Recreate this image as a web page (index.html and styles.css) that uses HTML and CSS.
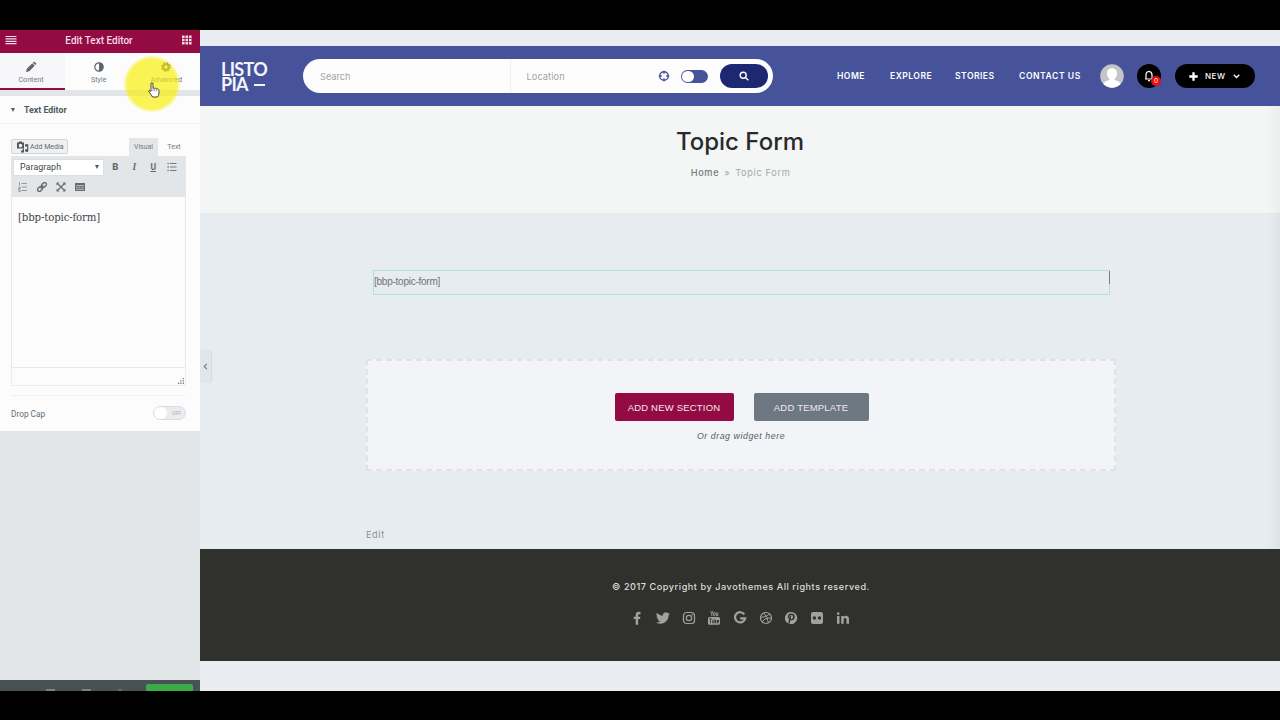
FILE: index.html
```
<!DOCTYPE html>
<html lang="en">
<head>
    <meta charset="UTF-8">
    <meta name="viewport" content="width=device-width, initial-scale=1.0">
    <title>Edit Text Editor - Topic Form</title>
    <link rel="stylesheet" href="styles.css">
</head>
<body>

    <div class="screen">
        <!-- Editor Panel -->
        <aside class="panel">
            <div class="panel-header">
                <svg width="12" height="10" viewBox="0 0 12 10"><path d="M0.5 1.5h11M0.5 3.9h11M0.5 6.3h11M0.5 8.7h11" stroke="#f3dbe5" stroke-width="1.2"/></svg>
                <span class="panel-title">Edit Text Editor</span>
                <svg width="10" height="10" viewBox="0 0 10 10" fill="#f3dbe5"><path d="M0 .5h2.6V3H0zM3.5.5h2.6V3H3.5zM7 .5h2.6V3H7zM0 3.8h2.6v2.4H0zM3.5 3.8h2.6v2.4H3.5zM7 3.8h2.6v2.4H7zM0 7h2.6v2.5H0zM3.5 7h2.6v2.5H3.5zM7 7h2.6v2.5H7z"/></svg>
            </div>

            <div class="tabs">
                <div class="tab active">
                    <svg width="12" height="12" viewBox="0 0 12 12" fill="#5c666d"><path d="M1 11l.8-3.2 5.5-5.5 2.4 2.4-5.5 5.5zM7.9 1.7l.8-.8q.5-.4 1 0l1.4 1.4q.4.5 0 1l-.8.8z"/></svg>
                    <span>Content</span>
                </div>
                <div class="tab">
                    <svg width="12" height="12" viewBox="0 0 12 12"><circle cx="6" cy="6" r="4.2" fill="none" stroke="#5c666d" stroke-width="1.2"/><path d="M6 1.8a4.2 4.2 0 0 1 0 8.4z" fill="#5c666d"/></svg>
                    <span>Style</span>
                </div>
                <div class="tab">
                    <svg width="12" height="12" viewBox="0 0 12 12"><circle cx="6" cy="6" r="2.7" fill="none" stroke="#5c666d" stroke-width="2"/><circle cx="6" cy="6" r="4.1" fill="none" stroke="#5c666d" stroke-width="1.4" stroke-dasharray="1.8 1.42"/></svg>
                    <span>Advanced</span>
                </div>
                <div class="pointer">
                    <svg width="12" height="16" viewBox="0 0 12 16"><path d="M3 9.5V2q0-1.3 1-1.3T5 2v4.2q.9-.7 1.6.2.9-.6 1.6.3 1-.5 1.7.5 1.1.1 1.1 1.5v2.2Q11 13.500 9.500 15H4.500Q3.500 13 1.200 10.200.3 8.800 1.200 8.400 2 8.200 3 9.500z" fill="#fff" stroke="#333" stroke-width=".9"/><path d="M5 6.200v3M6.800 7v2.200M8.600 7.300v2" stroke="#555" stroke-width=".6"/></svg>
                </div>
            </div>

            <div class="controls">
                <div class="section-title"><span class="arrow-down"></span>Text Editor</div>
                <div class="editor">
                    <div class="editor-top">
                        <div class="media-btn">
                            <svg width="13" height="12" viewBox="0 0 13 12" fill="#50575c"><path fill-rule="evenodd" d="M1 1.500h1.500L3.300.5h2.500l.8 1H8v6H1zM4.500 2.800a1.800 1.800 0 1 0 .01 0z"/><path d="M9 3.300h3.300v6.200a1.600 1.500 0 1 1-1.200-1.400V5.500H9zM8 7.500v3a1.500 1.300 0 1 1-1.200-1.200V7.500z"/></svg>
                            <span>Add Media</span>
                        </div>
                        <div class="mode active"><span>Visual</span></div>
                        <div class="mode"><span>Text</span></div>
                    </div>
                    <div class="toolbar">
                        <div class="tool-row">
                            <div class="format"><span>Paragraph</span><span class="arrow-down"></span></div>
                            <b class="tool">B</b>
                            <i class="tool">I</i>
                            <u class="tool">U</u>
                            <svg class="tool" viewBox="0 0 10 10"><path d="M3 1.500h6.500M3 5h6.500M3 8.500h6.500" stroke="#71797f"/><path d="M.5 1.500h1.300M.5 5h1.300M.5 8.500h1.300" stroke="#71797f" stroke-width="1.300"/></svg>
                        </div>
                        <div class="tool-row">
                            <svg class="tool" viewBox="0 0 10 10"><path d="M3.500 1.500H9M3.500 5H9M3.500 8.500H9M1.500 0v3.500M.6 5h1.500v1.500H.6V8h1.600v1.500H.5" stroke="#7d858b" stroke-width=".8" fill="none"/></svg>
                            <svg class="tool" viewBox="0 0 10 10"><g fill="none" stroke="#646c72" stroke-width="1.400" transform="rotate(-45 5 5)"><rect x="-.5" y="3.200" width="5.300" height="3.600" rx="1.800"/><rect x="5.200" y="3.200" width="5.300" height="3.600" rx="1.800"/><path d="M3 5h4"/></g></svg>
                            <svg class="tool" viewBox="0 0 10 10"><path d="M1.500 1.500l7 7M8.500 1.500l-7 7" stroke="#646c72" stroke-width="1.200"/><path d="M.5.5h3l-3 3zM9.500.5v3l-3-3zM.5 9.500v-3l3 3zM9.500 9.500h-3l3-3z" fill="#646c72"/></svg>
                            <svg class="tool" viewBox="0 0 10 10"><path d="M0 1h10v8H0z" fill="#646c72"/><path d="M1 3.700h8M1 7.300h8" stroke="#d5dade" stroke-width=".8"/><path d="M1 5.500h8" stroke="#b9bfc4" stroke-width=".8" stroke-dasharray="1 .5"/></svg>
                        </div>
                    </div>
                    <div class="editor-body"><span>[bbp-topic-form]</span></div>
                    <div class="editor-status">
                        <svg width="6" height="6" viewBox="0 0 6 6" fill="#7d8489"><path d="M4.700 0H6v1.300H4.700zM4.700 2.300H6v1.300H4.700zM2.300 2.300h1.300v1.300H2.300zM4.700 4.600H6V6H4.700zM2.300 4.600h1.300V6H2.300zM0 4.600h1.300V6H0z"/></svg>
                    </div>
                </div>
                <div class="drop-cap">
                    <span>Drop Cap</span>
                    <div class="switch"><span class="knob"></span><span class="off">OFF</span></div>
                </div>
            </div>

            <div class="panel-footer">
                <span class="stub"></span>
                <span class="stub"></span>
                <span class="stub small"></span>
                <div class="update-btn"></div>
            </div>
        </aside>

        <!-- Page Preview -->
        <main class="preview">
            <div class="collapse"><svg width="5" height="7" viewBox="0 0 5 7"><path d="M3.800.8L1.200 3.500l2.600 2.700" fill="none" stroke="#737b82" stroke-width="1.100"/></svg></div>

            <nav class="navbar">
                <div class="logo"><span>LISTO</span><span class="second">PIA<i class="dash"></i></span></div>
                <div class="search-bar">
                    <span class="field search">Search</span>
                    <span class="field location">Location</span>
                    <svg class="locate" width="12" height="12" viewBox="0 0 12 12" fill="none" stroke="#46529a"><circle cx="6" cy="6" r="4.300" stroke-width="1.400"/><path d="M6 .8v3M6 8.200v3M.8 6h3M8.200 6h3" stroke-width="1.400"/></svg>
                    <div class="near-toggle"></div>
                    <div class="search-btn"><svg width="10" height="10" viewBox="0 0 10 10" fill="none" stroke="#fff" stroke-width="1.400"><circle cx="4.200" cy="4.200" r="3"/><path d="M6.400 6.400l2.900 2.900"/></svg></div>
                </div>
                <div class="menu">
                    <span class="home">HOME</span>
                    <span class="explore">EXPLORE</span>
                    <span class="stories">STORIES</span>
                    <span class="contact">CONTACT US</span>
                </div>
                <svg class="avatar" width="24" height="24" viewBox="0 0 24 24"><defs><clipPath id="round"><circle cx="12" cy="12" r="11.800"/></clipPath></defs><g clip-path="url(#round)"><path d="M0 0h24v24H0z" fill="#c5c5c5"/><path d="M12 4.200c3 0 5 2.200 5 5.200 0 2.300-.9 4.200-2.300 5.200v1.400c3 .8 5.500 2 6.300 4.500V24H3v-3.500c.8-2.500 3.300-3.700 6.300-4.500v-1.400C7.900 13.600 7 11.700 7 9.400c0-3 2-5.200 5-5.200z" fill="#fff"/></g></svg>
                <div class="bell">
                    <svg width="12" height="12" viewBox="0 0 12 12" fill="none" stroke="#fff" stroke-width="1.200"><path d="M2 9h8M3 8.800V5q0-3.300 3-3.600Q9 1.700 9 5v3.800M5 10.700h2"/></svg>
                    <span class="badge">0</span>
                </div>
                <div class="new-btn">
                    <svg width="9" height="9" viewBox="0 0 9 9"><path d="M4.500.3v8.400M.3 4.500h8.400" stroke="#fff" stroke-width="2.300"/></svg>
                    <span>NEW</span>
                    <svg width="7" height="5" viewBox="0 0 7 5"><path d="M.8.800l2.700 2.700L6.200.8" fill="none" stroke="#fff" stroke-width="1.300"/></svg>
                </div>
            </nav>

            <header class="page-head">
                <h1>Topic Form</h1>
                <div class="breadcrumb"><b>Home</b><span class="sep">»</span><span>Topic Form</span></div>
            </header>

            <section class="content">
                <div class="widget"><span>[bbp-topic-form]</span><i class="handle"></i></div>
                <div class="drop-area">
                    <div class="actions">
                        <div class="btn add-section"><span>ADD NEW SECTION</span></div>
                        <div class="btn add-template"><span>ADD TEMPLATE</span></div>
                    </div>
                    <p>Or drag widget here</p>
                </div>
                <span class="edit-link">Edit</span>
            </section>

            <footer class="site-footer">
                <p>© 2017 Copyright by Javothemes All rights reserved.</p>
                <div class="social">
                    <svg viewBox="0 0 14 14"><path d="M10.500 1v2.200H9.200q-1.100 0-1.100 1v1.500h2.300l-.3 2.300h-2v5.700H5.700V8h-2V5.700h2V3.900Q5.800.9 8.600.8q1.200 0 1.900.2z"/></svg>
                    <svg viewBox="0 0 24 24"><path d="M23.950 4.570a10 10 0 0 1-2.820.770 4.960 4.960 0 0 0 2.160-2.720c-.95.560-2 .96-3.130 1.180a4.920 4.920 0 0 0-8.380 4.480C7.690 8.100 4.070 6.130 1.640 3.160a4.900 4.900 0 0 0 1.520 6.570 4.900 4.900 0 0 1-2.230-.61v.06c0 2.380 1.700 4.370 3.950 4.820a5 5 0 0 1-2.210.09 4.940 4.940 0 0 0 4.600 3.420A9.870 9.870 0 0 1 0 19.540a13.940 13.940 0 0 0 7.550 2.210c9.050 0 14-7.500 14-13.980l-.02-.63a9.940 9.940 0 0 0 2.420-2.570z"/></svg>
                    <svg viewBox="0 0 14 14"><g fill="none" stroke="#a1a19f" stroke-width="1.200"><rect x="1.500" y="1.500" width="11" height="11" rx="3"/><circle cx="7" cy="7" r="2.700"/></g><circle cx="10.200" cy="3.800" r=".8"/></svg>
                    <svg viewBox="0 0 14 14"><path d="M3.500 0l1.300 2.700V5M6 0L4.800 2.700M6.500 2v2.300q.8 1 1.600 0V2q-.8-1-1.600 0zM9.200 1.300v3.200q.9.600 1.600-.3M10.800 1.300V5" fill="none" stroke="#a1a19f" stroke-width=".9"/><path fill-rule="evenodd" d="M2.500 6h9q1.500 0 1.500 1.500v4.800q0 1.500-1.500 1.500h-9Q1 13.800 1 12.300V7.500Q1 6 2.500 6zM2.200 7.500v.8h1v4h.8v-4h1v-.8zM5.200 8.800v3.500h1.600V8.800h-.6v2.700h-.4V8.800zM7.500 7.500v4.800h1.700V9H8.100V7.500zM10 9v3.300h1.900v-.8h-1.200v-.6h1.200V9z"/></svg>
                    <svg viewBox="0 0 14 14"><path d="M11.300 3.400A5.100 5.100 0 1 0 12.100 7.400H7.200" fill="none" stroke="#a1a19f" stroke-width="2.200"/></svg>
                    <svg viewBox="0 0 14 14"><g fill="none" stroke="#a1a19f"><circle cx="7" cy="7" r="5.500" stroke-width="1.200"/><path d="M4.800 2q4.300 4.500 4.600 10M1.600 6.300q5.500.2 9-3.200M3.200 11q3-5 9.200-3.700"/></g></svg>
                    <svg viewBox="0 0 14 14"><path fill-rule="evenodd" d="M7 .9a6.100 6.100 0 1 1-1.800 11.900q.8-1.300 1-2.500l.4-1.400c1.800 1.200 4.200-.4 4.200-3.100 0-4.100-7-4.300-7-.2 0 1.200.6 2.300 1.500 2.500l.3-1C4.100 5.500 5.200 3.900 7.100 3.900c2.900 0 2.200 4.100.4 4.100-1.500 0-.5-1.800-.4-2.700 0-1.300-1.700-.9-1.700.6 0 .5.200.8.200.8L4.700 9.800q-.2 1.300 0 2.800A6.100 6.100 0 0 1 7 .9z"/></svg>
                    <svg viewBox="0 0 14 14"><path fill-rule="evenodd" d="M3 1h8q2 0 2 2v8q0 2-2 2H3q-2 0-2-2V3q0-2 2-2zM4.400 5.300a1.700 1.700 0 1 0 .01 0zM9.500 5.300a1.700 1.700 0 1 0 .01 0z"/></svg>
                    <svg viewBox="0 0 14 14"><path d="M1 5h2.500v7.800H1zM2.250 1.300a1.300 1.300 0 1 1-.01 0zM5.200 5h2.400v1.100C9 4 13 4.300 13 8v4.800h-2.500V8.500c0-2.200-2.800-2.100-2.800 0v4.300H5.200z"/></svg>
                </div>
            </footer>
        </main>
    </div>

</body>
</html>
```
FILE: styles.css
```
/* General Styles */
* { box-sizing: border-box; }
body { margin: 0; height: 720px; padding: 30px 0 29px; background-color: #000; font-family: Inter, sans-serif; overflow: hidden; }
.screen { display: flex; height: 661px; overflow: hidden; }
svg { display: block; flex: none; }
span { white-space: nowrap; }

/* Editor Panel */
.panel { width: 200px; flex: none; display: flex; flex-direction: column; background-color: #e2e6e9; font-family: Roboto, sans-serif; color: #5c656c; }
.panel-header { height: 23px; display: flex; align-items: center; justify-content: space-between; padding: 0 8px 3px 5px; background-color: #930b42; }
.panel-title { margin-right: 1px; font-size: 10px; font-weight: 500; color: #f4dce6; letter-spacing: 0; }
.tabs { position: relative; height: 37px; display: flex; background-color: #fcfcfd; }
.tab { flex: 1; display: flex; flex-direction: column; align-items: center; padding-top: 8px; font-size: 7.200px; line-height: 8px; gap: 2.500px; color: #737b82; }
.tab.active { flex: none; width: 65px; padding-right: 3px; border-bottom: 2px solid #930b42; background-color: #f7f7f9; }
.pointer { position: absolute; left: 123px; top: 2px; width: 58px; height: 58px; z-index: 2; border-radius: 50%; background: radial-gradient(closest-side, rgba(248, 239, 0, 0.66) 85%, rgba(248, 239, 0, 0) 100%); }
.pointer svg { margin: 27px 0 0 25px; }

/* Panel Controls */
.controls { margin-top: 6px; height: 335px; background-color: #fcfcfd; }
.section-title { height: 28px; display: flex; align-items: center; gap: 9px; padding-left: 11px; border-bottom: 1px solid #f0f1f3; font-size: 8.800px; font-weight: 700; color: #4e585f; }
.arrow-down { border: 2.700px solid transparent; border-top: 4px solid #525b61; border-bottom: 0; }
.editor { margin: 14px 14px 0 11px; height: 248px; display: flex; flex-direction: column; }
.editor-top { display: flex; height: 18px; font-size: 7px; color: #737b82; }
.media-btn { width: 57px; height: 15px; flex: none; display: flex; align-items: center; gap: 1px; padding-left: 4px; border: 1px solid #d3d6d9; border-radius: 2px; background-color: #eff0f2; color: #5f676d; font-size: 7px; margin: 1px 61px 0 0; }
.mode { width: 32px; flex: none; display: flex; justify-content: center; align-items: center; }
.mode.active { width: 29px; background-color: #e3e7ea; }
.toolbar { height: 41px; background-color: #e2e6e9; padding: 1px 0 0 2px; }
.tool-row { height: 20px; display: flex; align-items: center; }
.format { width: 93px; height: 17px; margin-right: 6px; display: flex; align-items: center; justify-content: space-between; padding: 0 4px 0 6px; background-color: #fff; border: 1px solid #dadfe2; font-size: 8.800px; color: #40464a; letter-spacing: 0.100px; }
.tool { width: 10px; height: 10px; flex: none; margin-right: 8.900px; text-align: center; font-size: 9.500px; line-height: 10px; color: #646c72; }
b.tool { font-weight: 900; }
i.tool { font-family: "Liberation Serif", serif; font-weight: 700; }
u.tool { font-size: 8.500px; font-weight: 700; }
.tool-row + .tool-row { padding-left: 5px; }
.editor-body { flex: 1; border: 1px solid #e6e8eb; border-top: 0; padding: 14px 6px; font-family: "DejaVu Serif", serif; font-size: 10.200px; line-height: 13px; letter-spacing: -0.150px; color: #41464a; }
.editor-status { height: 18px; border: 1px solid #eceef0; border-top: 0; display: flex; align-items: flex-end; justify-content: flex-end; padding: 0 1px 1px; }
.drop-cap { margin: 9px 14px 0 11px; padding-top: 10px; border-top: 1px solid #f0f1f3; display: flex; align-items: center; justify-content: space-between; font-size: 8.300px; color: #656e75; }
.drop-cap > span { padding-top: 1px; }
.switch { width: 33px; height: 14px; display: flex; align-items: center; border: 1px solid #d9dde0; border-radius: 7px; background-color: #eaecef; }
.knob { width: 13px; height: 12px; border-radius: 6px; background-color: #fff; }
.off { margin-left: 5px; font-size: 5px; color: #a9b0b5; }
.panel-footer { margin-top: auto; height: 11px; display: flex; align-items: flex-end; background-color: #495155; padding: 0 7px 0 46px; }
.stub { width: 9px; height: 2px; margin-right: 27px; background-color: #7b8286; }
.stub.small { width: 4px; margin-right: 0; background-color: #676e72; }
.update-btn { margin-left: auto; width: 47px; height: 7px; border-radius: 2px 2px 0 0; background-color: #3cac49; }

/* Preview */
.preview { position: relative; flex: 1; background-color: #e9edf2; padding-top: 16px; }
.collapse { position: absolute; left: 0; top: 320px; width: 11px; height: 33px; display: flex; align-items: center; justify-content: center; background-color: #e2e6e9; border-radius: 0 3px 3px 0; box-shadow: 1px 0 1px rgba(0, 0, 0, 0.08); }
.navbar { height: 60px; display: flex; align-items: center; padding: 0 25px 0 21px; background-color: #465299; color: #fff; }
.logo { width: 82px; padding-top: 1px; font-family: Lato, sans-serif; font-weight: 700; font-size: 18px; line-height: 15px; color: #f4f5fc; }
.logo span { display: block; letter-spacing: -0.700px; }
.logo .second { display: flex; align-items: center; }
.dash { width: 11px; height: 2px; margin: 1px 0 0 6px; background-color: #f4f5fc; }

/* Search */
.search-bar { width: 470px; height: 34px; flex: none; display: flex; align-items: center; background-color: #fdfdfe; border-radius: 17px; padding-right: 5px; font-size: 9.200px; color: #a3a3a6; }
.field { height: 34px; line-height: 35px; }
.search { width: 208px; padding-left: 17px; border-right: 1px solid #f0f0f3; }
.location { width: 147px; padding-left: 16px; letter-spacing: 0.100px; }
.locate { margin-left: 1px; }
.near-toggle { width: 27px; height: 13px; margin: 0 12px 0 11px; border-radius: 7px; background-color: #46529a; display: flex; align-items: center; padding-left: 1px; }
.near-toggle::before { content: ""; width: 12px; height: 11px; border-radius: 6px; background-color: #fff; }
.search-btn { width: 48px; height: 24px; border-radius: 12px; background-color: #1d2873; display: flex; align-items: center; justify-content: center; }

/* Menu */
.menu { display: flex; flex: none; gap: 24px; margin-left: 64px; font-size: 8.600px; font-weight: 600; letter-spacing: 0.45px; }
.home { width: 29px; }
.explore { width: 41px; }
.stories { width: 40px; }
.contact { width: 63px; letter-spacing: 0.550px; }
.avatar { margin-left: 18px; }
.bell { position: relative; width: 24px; height: 24px; flex: none; margin: 0 14px 0 13px; border-radius: 50%; background-color: #000; display: flex; align-items: center; justify-content: center; }
.badge { position: absolute; left: 14px; top: 12px; width: 10px; height: 10px; border-radius: 50%; background-color: #ee0c12; font-size: 6.500px; line-height: 10px; text-align: center; }
.new-btn { width: 80px; height: 24px; flex: none; border-radius: 12px; background-color: #000; display: flex; align-items: center; padding-left: 14px; font-size: 8px; font-weight: 500; letter-spacing: 0.500px; }
.new-btn span { width: 28px; margin-left: 7px; }

/* Page Head */
.page-head { height: 107px; background: linear-gradient(to left, #eceeee, #f4f6f6 12px); display: flex; flex-direction: column; align-items: center; padding-top: 20px; }
h1 { margin: 0; font-size: 24px; line-height: 32px; font-weight: 500; color: #282a2b; letter-spacing: 0; }
.breadcrumb { display: flex; margin-top: 8px; padding-left: 1px; font-size: 9.200px; line-height: 13px; letter-spacing: 0.65px; color: #a5a8a8; }
.breadcrumb b { font-weight: 500; color: #777b7b; }
.sep { margin: 0 5px; }

/* Content */
.content { height: 336px; padding: 57px 164px 0 166px; background: linear-gradient(to left, #dfe3e6, #e7ecf0 12px); }
.widget { position: relative; height: 25px; margin: 0 6px 0 7px; border: 1px solid #aee0e6; font-family: "Liberation Sans", sans-serif; font-size: 10px; line-height: 21px; color: #6f7376; letter-spacing: -0.250px; }
.handle { position: absolute; right: -1px; top: 0; width: 1px; height: 13px; background-color: #6e7f8e; }
.drop-area { height: 112px; margin: 64px 0 0 0; border: 2px dashed #dfe2e6; background-color: #f2f4f8; padding-top: 32px; font-family: "Liberation Sans", sans-serif; }
.actions { display: flex; gap: 20px; justify-content: center; padding-left: 1px; }
.btn { height: 28px; border-radius: 2px; display: flex; align-items: center; justify-content: center; color: #f1e9ee; font-size: 9.500px; letter-spacing: 0.200px; }
.add-section { width: 119px; background-color: #930b42; }
.add-template { width: 115px; background-color: #6d7882; }
.drop-area p { margin: 9px 0 0; text-align: center; font-size: 8.800px; line-height: 12px; font-style: italic; letter-spacing: 0.550px; color: #565d62; }
.edit-link { display: block; margin-top: 57px; font-size: 9.200px; line-height: 13px; letter-spacing: 0.6px; color: #8b9093; }

/* Footer */
.site-footer { height: 112px; background-color: #30302d; padding-top: 31px; text-align: center; }
.site-footer p { margin: 0; padding-left: 2px; font-size: 9.100px; line-height: 14px; font-weight: 500; letter-spacing: 0.550px; color: #dededc; }
.social { display: flex; justify-content: center; gap: 11.650px; margin: 17px 0 0; }
.social svg { width: 14px; height: 14px; fill: #a1a19f; }
```
